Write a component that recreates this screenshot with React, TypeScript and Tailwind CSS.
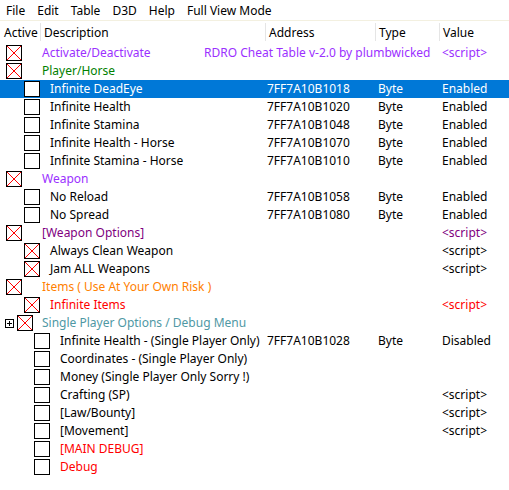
import React from "react"

type Row = {
  level: 0 | 1 | 2
  mark?: "x" | "none"
  plus?: boolean
  text: string
  color?: string
  addr?: string
  type?: string
  value?: string
  valueColor?: string
  selected?: boolean
  extra?: string
}

const rows: Row[] = [
  { level: 0, mark: "x", text: "Activate/Deactivate", color: "text-[#9b30ff]", extra: "RDRO Cheat Table v-2.0 by plumbwicked", value: "<script>", valueColor: "text-[#9b30ff]" },
  { level: 0, mark: "x", text: "Player/Horse", color: "text-[#008000]" },
  { level: 1, text: "Infinite DeadEye", addr: "7FF7A10B1018", type: "Byte", value: "Enabled", selected: true },
  { level: 1, text: "Infinite Health", addr: "7FF7A10B1020", type: "Byte", value: "Enabled" },
  { level: 1, text: "Infinite Stamina", addr: "7FF7A10B1048", type: "Byte", value: "Enabled" },
  { level: 1, text: "Infinite Health - Horse", addr: "7FF7A10B1070", type: "Byte", value: "Enabled" },
  { level: 1, text: "Infinite Stamina - Horse", addr: "7FF7A10B1010", type: "Byte", value: "Enabled" },
  { level: 0, mark: "x", text: "Weapon", color: "text-[#9b30ff]" },
  { level: 1, text: "No Reload", addr: "7FF7A10B1058", type: "Byte", value: "Enabled" },
  { level: 1, text: "No Spread", addr: "7FF7A10B1080", type: "Byte", value: "Enabled" },
  { level: 0, mark: "x", text: "[Weapon Options]", color: "text-[#800080]", value: "<script>", valueColor: "text-[#800080]" },
  { level: 1, mark: "x", text: "Always Clean Weapon", value: "<script>" },
  { level: 1, mark: "x", text: "Jam ALL Weapons", value: "<script>" },
  { level: 0, mark: "x", text: "Items ( Use At Your Own Risk )", color: "text-[#ff8000]" },
  { level: 1, mark: "x", text: "Infinite Items", color: "text-[#ff0000]", value: "<script>", valueColor: "text-[#ff0000]" },
  { level: 0, mark: "x", plus: true, text: "Single Player Options / Debug Menu", color: "text-[#4f98a4]" },
  { level: 2, text: "Infinite Health - (Single Player Only)", addr: "7FF7A10B1028", type: "Byte", value: "Disabled" },
  { level: 2, text: "Coordinates - (Single Player Only)" },
  { level: 2, text: "Money (Single Player Only Sorry !)" },
  { level: 2, text: "Crafting (SP)", value: "<script>" },
  { level: 2, text: "[Law/Bounty]", value: "<script>" },
  { level: 2, text: "[Movement]", value: "<script>" },
  { level: 2, text: "[MAIN DEBUG]", color: "text-[#ff0000]" },
  { level: 2, text: "Debug", color: "text-[#ff0000]" },
]

function CheckBox({ mark }: { mark?: "x" | "none" }) {
  return (
    <div className="w-4 h-4 border border-black bg-white shrink-0">
      {mark === "x" && (
        <svg width="14" height="14" viewBox="0 0 14 14" className="block">
          <path d="M0 0L14 14M14 0L0 14" stroke="#ff0000" strokeWidth="1" />
        </svg>
      )}
    </div>
  )
}

function PlusBox() {
  return (
    <svg width="9" height="9" viewBox="0 0 9 9" className="block shrink-0">
      <rect x="0.5" y="0.5" width="8" height="8" fill="white" stroke="black" />
      <path d="M2 4.5H7M4.5 2V7" stroke="black" />
    </svg>
  )
}

export default function App() {
  const menu = ["File", "Edit", "Table", "D3D", "Help", "Full View Mode"]

  return (
    <div className="w-[509px] h-[490px] bg-white overflow-hidden text-[12px] text-black" style={{ fontFamily: '"Noto Sans", sans-serif' }}>
      <div className="h-[21px] flex items-center border-b border-[#f3f0e0]">
        {menu.map((m) => (
          <span key={m} className="px-[6px] pt-px leading-[22px]">
            {m}
          </span>
        ))}
      </div>

      <div className="h-[21px] flex items-end pb-px">
        <div className="w-[41px] pl-[4px] border-r border-[#e5e5e5] h-[18px] leading-[20px]">Active</div>
        <div className="w-[225px] pl-[3px] border-r border-[#e5e5e5] h-[18px] leading-[20px]">Description</div>
        <div className="w-[110px] pl-[3px] border-r border-[#e5e5e5] h-[18px] leading-[20px]">Address</div>
        <div className="w-[64px] pl-[3px] border-r border-[#e5e5e5] h-[18px] leading-[20px]">Type</div>
        <div className="flex-1 pl-[3px] h-[18px] leading-[20px]">Value</div>
      </div>

      <div className="mt-[2px]">
        {rows.map((r, i) => {
          const textColor = r.selected ? "text-white" : r.color ?? "text-black"
          const cellColor = r.selected ? "text-white" : "text-black"
          return (
            <div key={i} className={`h-[18px] flex items-center whitespace-nowrap ${r.selected ? "bg-[#0078d7]" : ""}`}>
              <div className="w-[266px] flex items-center shrink-0">
                {r.level === 0 && !r.plus && (
                  <>
                    <div className="w-[6px] shrink-0" />
                    <CheckBox mark={r.mark} />
                    <div className="w-[20px] shrink-0" />
                  </>
                )}
                {r.level === 0 && r.plus && (
                  <>
                    <div className="w-[5px] shrink-0" />
                    <PlusBox />
                    <div className="w-[3px] shrink-0" />
                    <CheckBox mark={r.mark} />
                    <div className="w-[9px] shrink-0" />
                  </>
                )}
                {r.level === 1 && (
                  <>
                    <div className="w-[24px] shrink-0" />
                    <CheckBox mark={r.mark} />
                    <div className="w-[10px] shrink-0" />
                  </>
                )}
                {r.level === 2 && (
                  <>
                    <div className="w-[34px] shrink-0" />
                    <CheckBox mark={r.mark} />
                    <div className="w-[10px] shrink-0" />
                  </>
                )}
                {r.extra ? (
                  <>
                    <span className={`w-[162px] shrink-0 ${textColor}`}>{r.text}</span>
                    <span className={`shrink-0 ${textColor}`}>{r.extra}</span>
                  </>
                ) : (
                  <span className={textColor}>{r.text}</span>
                )}
              </div>
              <div className={`w-[110px] shrink-0 pl-px ${cellColor}`}>{r.extra ? "" : r.addr}</div>
              <div className={`w-[64px] shrink-0 pl-[2px] ${cellColor}`}>{r.type}</div>
              <div className={`flex-1 pl-[2px] ${r.selected ? "text-white" : r.valueColor ?? "text-black"}`}>{r.value}</div>
            </div>
          )
        })}
      </div>
    </div>
  )
}
